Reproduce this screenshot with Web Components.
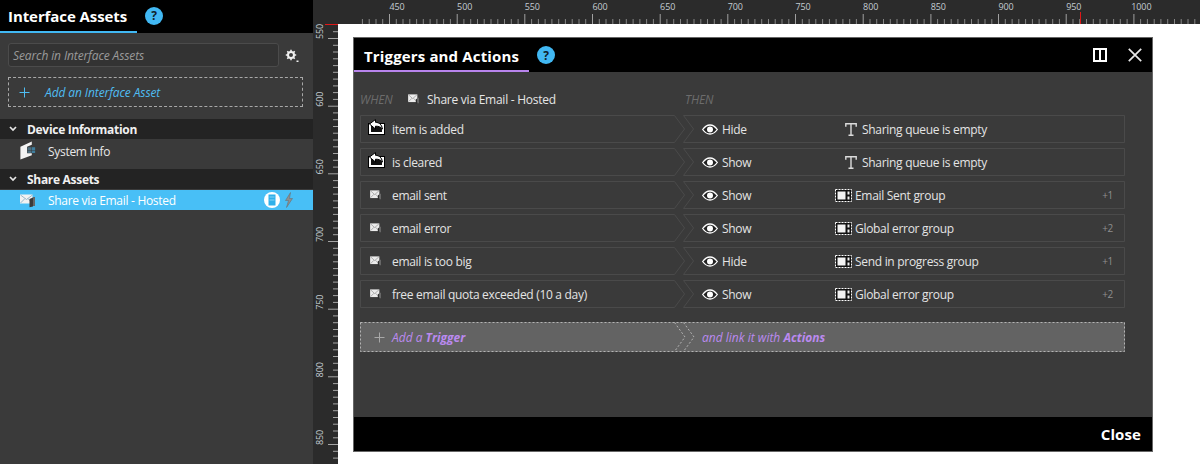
<!DOCTYPE html>
<html>
<head>
<meta charset="utf-8">
<title>Triggers and Actions</title>
<style>
  html, body { margin: 0; height: 464px; overflow: hidden; background: #fff; }
  body { display: flex; font-family: "Open Sans", "Liberation Sans", sans-serif; font-size: 12px; letter-spacing: -.3px; }
</style>
</head>
<body>
<asset-panel></asset-panel>
<work-space>
  <trigger-dialog>
    <trigger-row icon="reply" when="item is added" verb="Hide" kind="text" target="Sharing queue is empty"></trigger-row>
    <trigger-row icon="reply" when="is cleared" verb="Show" kind="text" target="Sharing queue is empty"></trigger-row>
    <trigger-row icon="mail" when="email sent" verb="Show" kind="group" target="Email Sent group" more="+1"></trigger-row>
    <trigger-row icon="mail" when="email error" verb="Show" kind="group" target="Global error group" more="+2"></trigger-row>
    <trigger-row icon="mail" when="email is too big" verb="Hide" kind="group" target="Send in progress group" more="+1"></trigger-row>
    <trigger-row icon="mail" when="free email quota exceeded (10 a day)" verb="Show" kind="group" target="Global error group" more="+2"></trigger-row>
  </trigger-dialog>
</work-space>

<script>
const ICONS = {
  reply: `<svg width="17" height="16" viewBox="0 0 17 16"><path d="M0 4h17v12H0z" fill="#000"/><path d="M2 6h13v8H2z" fill="#111" stroke="#fff" stroke-width="2"/><path d="M1.500 5L7.500 .5v2.800c3.800.2 6.200 2.200 7 6.700-1.600-2-3.700-2.800-7-2.800v2.800z" fill="#fff" stroke="#000" stroke-width="1"/></svg>`,
  mail: `<svg width="11" height="10" viewBox="0 0 14 13"><path d="M0 .5h12v10H0z" fill="#ececec"/><path d="M.5 1l5.500 5 5.500-5M.5 10l4.500-4.500M11.500 10L7 5.500" fill="none" stroke="#9c9c9c" stroke-width="1"/><path d="M10 7l2-1.500v7l-2 .5z" fill="#2f2f2f"/><path d="M12 5h2v7h-2z" fill="#6d6d6d"/></svg>`,
  bigmail: `<svg width="16" height="15" viewBox="0 0 16 15"><path d="M0 1.500h12.500v9H0z" fill="#f2f2f2"/><path d="M.5 2l6 4.500 6-4.500M.5 10l4.500-4.500M12 10L8 5.500" fill="none" stroke="#8eb0c4" stroke-width=".9"/><path d="M9.500 6l3.500-1.500v9l-3.500.8z" fill="#3a3a3a"/><path d="M13 4h2v9h-2z" fill="#666"/></svg>`,
  sys: `<svg width="16" height="19" viewBox="0 0 16 20"><path d="M0 6l12-5.500v3.500L7 6v7h5v2L0 19.500z" fill="#f4f4f4"/><path d="M7.500 6.500h4v3h-4zM7.500 10h4v2.500h-4z" fill="#4f6f80"/><path d="M12 6.500h3.500v3H12zM12 10h3.500v2.500H12z" fill="#3f7d9c"/></svg>`,
  eye: `<svg width="16" height="11" viewBox="0 0 16 11"><path d="M.7 5.500C3 2.200 5.400 1 8 1s5 1.200 7.300 4.500C13 8.800 10.600 10 8 10S3 8.800.7 5.500z" fill="#222" stroke="#fff" stroke-width="1.300"/><circle cx="8" cy="5.500" r="3" fill="#fff"/></svg>`,
  group: `<svg width="17" height="13" viewBox="0 0 17 13"><rect x=".5" y=".5" width="16" height="12" fill="#111" stroke="#fff" stroke-dasharray="2 1"/><path d="M2.500 2.500h8v8h-8z" fill="#f2f2f2"/><path d="M12.500 2.500h2v3h-2zM12.500 7.500h2v3h-2z" fill="#f2f2f2"/></svg>`,
  t: `<svg width="12" height="13" viewBox="0 0 12 13"><path d="M.8 3.800V.8h10.400v3M6 .8v11.400M3.500 12.200h5" fill="none" stroke="#dcdcdc" stroke-width="1.400"/></svg>`,
  gear: `<svg width="14" height="14" viewBox="0 0 14 14"><circle cx="6" cy="6" r="3" fill="none" stroke="#f0f0f0" stroke-width="2"/><path d="M6 .8v2M6 9.200v2M.8 6h2M9.200 6h2M2.300 2.300l1.400 1.400M8.300 8.300l1.400 1.400M2.300 9.700l1.400-1.400M8.300 3.700l1.400-1.400" stroke="#f0f0f0" stroke-width="1.600"/><path d="M11.500 11.500h2v1.500h-2z" fill="#f0f0f0"/></svg>`,
  chevron: `<svg width="8" height="6" viewBox="0 0 8 6"><path d="M1 1l3 3 3-3" fill="none" stroke="#e6e6e6" stroke-width="1.700"/></svg>`,
  split: `<svg width="14" height="14" viewBox="0 0 14 14"><path d="M1 1h12v12H1zM7 1v12" fill="none" stroke="#fff" stroke-width="2"/></svg>`,
  close: `<svg width="14" height="14" viewBox="0 0 14 14"><path d="M.8.800l12.400 12.400M13.200.800L.8 13.200" stroke="#e8e8e8" stroke-width="1.700"/></svg>`,
  plus: `<svg width="11" height="11" viewBox="0 0 11 11"><path d="M5.500.5v10M.5 5.500h10" stroke="currentColor" stroke-width="1"/></svg>`,
  doc: `<svg width="18" height="18" viewBox="0 0 18 18"><circle cx="9" cy="9" r="8" fill="#fff"/><path d="M5.500 3.500h7v11h-7z" fill="#2fb0ea"/><path d="M6.500 6h5M6.500 9h5" stroke="#9bdcf8" stroke-width=".8"/></svg>`,
  bolt: `<svg width="10" height="16" viewBox="0 0 10 16"><path d="M6.500.5L1.500 8.500h3L2.500 15.500l6-9h-3z" fill="#8f8f8f" stroke="#666" stroke-width=".5"/></svg>`
};

class UiIcon extends HTMLElement {
  connectedCallback() {
    const root = this.attachShadow({mode: 'open'});
    root.innerHTML = `<style>:host { display: inline-flex; align-items: center; justify-content: center; flex: none; }
      svg { display: block; }</style>${ICONS[this.getAttribute('name')]}`;
  }
}
customElements.define('ui-icon', UiIcon);

class HelpBadge extends HTMLElement {
  connectedCallback() {
    this.attachShadow({mode: 'open'}).innerHTML = `<style>
      :host { display: inline-flex; width: 18px; height: 18px; border-radius: 50%; background: #41b8f3; color: #10222c;
        align-items: center; justify-content: center; font: 700 12px "Open Sans", sans-serif; }
    </style>?`;
  }
}
customElements.define('help-badge', HelpBadge);

class AssetGroup extends HTMLElement {
  connectedCallback() {
    this.attachShadow({mode: 'open'}).innerHTML = `<style>
      :host { display: flex; align-items: center; height: 20px; background: #232323; color: #f0f0f0;
        font-weight: 700; font-size: 12px; padding-left: 9px; gap: 10px; }
    </style><ui-icon name="chevron"></ui-icon><slot></slot>`;
  }
}
customElements.define('asset-group', AssetGroup);

class AssetItem extends HTMLElement {
  connectedCallback() {
    this.attachShadow({mode: 'open'}).innerHTML = `<style>
      :host { display: flex; align-items: center; height: 20px; color: #e8e8e8; position: relative; }
      :host([tall]) { height: 30px; align-items: flex-start; box-sizing: border-box; padding-top: 2px; }
      :host([tall]) .txt { padding-top: 2px; }
      :host([selected]) { background: #48bff6; color: #fff; margin-top: 1px; }
      .ic { width: 48px; display: flex; justify-content: flex-end; padding-right: 12px; box-sizing: border-box; }
      .tail { margin-left: auto; display: flex; align-items: center; gap: 3px; padding-right: 19px; }
    </style>
    <span class="ic"><ui-icon name="${this.getAttribute('icon')}"></ui-icon></span>
    <span class="txt"><slot></slot></span>
    <span class="tail"><slot name="tail"></slot></span>`;
  }
}
customElements.define('asset-item', AssetItem);

class AssetPanel extends HTMLElement {
  connectedCallback() {
    this.attachShadow({mode: 'open'}).innerHTML = `<style>
      :host { display: block; width: 313px; height: 464px; background: #3a3a3a; flex: none; color: #eee; }
      header { height: 33px; background: #000; display: flex; align-items: center; box-sizing: border-box; }
      .tab { width: 137px; height: 33px; box-sizing: border-box; border-bottom: 2px solid #41b8f3; padding-left: 8px;
        font: 700 15px/33px "Open Sans", sans-serif; letter-spacing: -.08px; color: #fff; }
      help-badge { margin-left: 8px; margin-top: -2px; }
      .tools { padding: 10px 10px 0 8px; }
      .search { display: flex; align-items: center; gap: 6px; }
      .box { width: 271px; height: 24px; box-sizing: border-box; background: #333; border: 1px solid #4b4b4b; border-radius: 3px;
        color: #9a9a9a; font-style: italic; line-height: 23px; padding-left: 4px; letter-spacing: -.12px; }
      .search ui-icon { margin-top: 1px; }
      .add { display: flex; align-items: center; height: 30px; box-sizing: border-box; margin-top: 10px;
        border: 1px dashed #a8a8a8; color: #4fbdf2; font-style: italic; padding-left: 10px; gap: 15px; letter-spacing: -.1px; }
      .list { margin-top: 12px; }
      .add ui-icon { color: #4fbdf2; }
    </style>
    <header><div class="tab">Interface Assets</div><help-badge></help-badge></header>
    <div class="tools">
      <div class="search"><div class="box">Search in Interface Assets</div><ui-icon name="gear"></ui-icon></div>
      <div class="add"><ui-icon name="plus"></ui-icon><span>Add an Interface Asset</span></div>
    </div>
    <div class="list">
      <asset-group>Device Information</asset-group>
      <asset-item icon="sys" tall>System Info</asset-item>
      <asset-group>Share Assets</asset-group>
      <asset-item icon="bigmail" selected>Share via Email - Hosted
        <ui-icon slot="tail" name="doc"></ui-icon><ui-icon slot="tail" name="bolt"></ui-icon>
      </asset-item>
    </div>`;
  }
}
customElements.define('asset-panel', AssetPanel);

// px per design unit on both rulers, from the 50 unit label spacing
const RULER_SCALE = 67.67 / 50;

class UiRuler extends HTMLElement {
  connectedCallback() {
    const vertical = this.hasAttribute('vertical');
    const marks = [];
    if (!vertical) {
      for (let v = 430; v <= 1045; v += 5) {
        const x = 76 + (v - 450) * RULER_SCALE;
        if (x < 25) continue;
        const major = v % 50 === 0;
        marks.push(`<rect x="${x.toFixed(1)}" y="${major ? 14 : 19}" width="1" height="${major ? 10 : 5}" fill="${major ? '#a0a0a0' : '#868686'}"/>`);
        if (major) marks.push(`<text x="${x + 8}" y="10" text-anchor="middle">${v}</text>`);
      }
      marks.push(`<rect x="767" y="12" width="1" height="12" fill="#e01818"/><rect x="0" y="0" width="25" height="24" fill="#2b2b2b"/>`);
    } else {
      for (let v = 545; v <= 875; v += 5) {
        const y = 14 + (v - 550) * RULER_SCALE;
        if (y < 0) continue;
        const major = v % 50 === 0;
        marks.push(`<rect x="${major ? 15 : 20}" y="${y.toFixed(1)}" width="${major ? 10 : 5}" height="1" fill="#a4a4a4"/>`);
        if (major) marks.push(`<text transform="translate(10 ${y - 6.5}) rotate(-90)" text-anchor="middle">${v}</text>`);
      }
      marks.push(`<rect x="12" y="0" width="13" height="1" fill="#e01818"/>`);
    }
    const w = vertical ? 25 : 887, h = vertical ? 440 : 24;
    this.attachShadow({mode: 'open'}).innerHTML = `<style>
      :host { display: block; flex: none; width: ${w}px; height: ${h}px; background: #2b2b2b; }
      svg { display: block; }
      text { font: 9px "Open Sans", sans-serif; fill: #c4ccd2; letter-spacing: -.1px; }
    </style><svg width="${w}" height="${h}">${marks.join('')}</svg>`;
  }
}
customElements.define('ui-ruler', UiRuler);

class WorkSpace extends HTMLElement {
  connectedCallback() {
    this.attachShadow({mode: 'open'}).innerHTML = `<style>
      :host { display: flex; flex-direction: column; flex: 1; height: 464px; min-width: 0; }
      .body { display: flex; flex: 1; }
      .canvas { flex: 1; background: #fff; padding: 13px 0 0 15px; }
    </style>
    <ui-ruler></ui-ruler>
    <div class="body"><ui-ruler vertical></ui-ruler><div class="canvas"><slot></slot></div></div>`;
  }
}
customElements.define('work-space', WorkSpace);

class TriggerDialog extends HTMLElement {
  connectedCallback() {
    this.attachShadow({mode: 'open'}).innerHTML = `<style>
      :host { display: flex; flex-direction: column; width: 800px; height: 415px; box-sizing: border-box;
        border: 1px solid #666; background: #3a3a3a; color: #e6e6e6; }
      header { height: 34px; flex: none; background: #000; display: flex; align-items: center; }
      .tab { width: 175px; height: 34px; box-sizing: border-box; border-bottom: 2px solid #b884ec; padding-left: 10px;
        font: 700 15px/36px "Open Sans", sans-serif; letter-spacing: .15px; color: #fff; }
      help-badge { margin-left: 8px; }
      .acts { margin-left: auto; display: flex; align-items: center; gap: 21px; padding-right: 10px; }
      main { flex: 1; padding: 17px 27px 0 6px; display: flex; flex-direction: column; gap: 5px; }
      .heads { display: flex; align-items: center; height: 21px; margin-bottom: 0; }
      .label { color: #6c6c6c; font-style: italic; letter-spacing: -.1px; }
      .when { width: 48px; }
      .src { width: 19px; }
      .hostname { width: 258px; letter-spacing: -.25px; }
      footer { height: 34px; flex: none; background: #000; display: flex; align-items: center; justify-content: flex-end;
        padding-right: 11px; font: 700 15px "Open Sans", sans-serif; color: #fff; letter-spacing: .1px; }
    </style>
    <header><div class="tab">Triggers and Actions</div><help-badge></help-badge>
      <div class="acts"><ui-icon name="split"></ui-icon><ui-icon name="close"></ui-icon></div></header>
    <main>
      <div class="heads"><span class="label when">WHEN</span><span class="src"><ui-icon name="mail"></ui-icon></span>
        <span class="hostname">Share via Email - Hosted</span><span class="label">THEN</span></div>
      <slot></slot>
      <add-row></add-row>
    </main>
    <footer>Close</footer>`;
  }
}
customElements.define('trigger-dialog', TriggerDialog);

class TriggerRow extends HTMLElement {
  connectedCallback() {
    const a = n => this.getAttribute(n) || '';
    const isText = a('kind') === 'text';
    const isMail = a('icon') === 'mail';
    this.attachShadow({mode: 'open'}).innerHTML = `<style>
      :host { display: flex; position: relative; height: 28px; align-items: center; color: #e4e4e4; }
      svg.outline { position: absolute; left: 0; top: 0; }
      .when { width: 323px; display: flex; align-items: center; padding-left: 8px; box-sizing: border-box; position: relative; }
      .when .ic { width: ${isMail ? 22 : 24}px; padding-left: ${isMail ? 2 : 0}px; }
      .then { flex: 1; display: flex; align-items: center; position: relative; padding-left: 19px; }
      .verb { width: ${isText ? 143 : 133}px; display: flex; align-items: center; gap: 4px; }
      .target { display: flex; align-items: center; gap: ${isText ? 5 : 3}px; }
      .more { position: absolute; right: 12px; color: #8e8e8e; font-size: 10px; }
    </style>
    <svg class="outline" width="765" height="28" fill="none" stroke="#4a4a4a">
      <path d="M.5.500H314.500L324.500 14 314.500 27.500H.5z"/>
      <path d="M323.500.500H764.500V27.500H323.500L333.500 14z"/>
    </svg>
    <div class="when"><span class="ic"><ui-icon name="${a('icon')}"></ui-icon></span>${a('when')}</div>
    <div class="then">
      <span class="verb"><ui-icon name="eye"></ui-icon>${a('verb')}</span>
      <span class="target"><ui-icon name="${isText ? 't' : 'group'}"></ui-icon>${a('target')}</span>
      ${a('more') ? `<span class="more">${a('more')}</span>` : ''}
    </div>`;
  }
}
customElements.define('trigger-row', TriggerRow);

class AddRow extends HTMLElement {
  connectedCallback() {
    this.attachShadow({mode: 'open'}).innerHTML = `<style>
      :host { display: flex; position: relative; height: 30px; margin-top: 9px; align-items: center; color: #bb8af0; font-style: italic; letter-spacing: 0; }
      svg { position: absolute; left: 0; top: 0; }
      .a { width: 342px; display: flex; align-items: center; position: relative; gap: 7px; padding-left: 14px; box-sizing: border-box; }
      .a ui-icon { color: #a8a8a8; }
      span { position: relative; }
    </style>
    <svg width="765" height="30">
      <rect width="765" height="30" fill="#636363"/>
      <rect x=".5" y=".5" width="764" height="29" fill="none" stroke="#b4b4b4" stroke-dasharray="2 2"/>
      <path d="M314.500 .5L325 15 314.500 29.500M323.500 .5L334 15 323.500 29.500" fill="none" stroke="#b4b4b4" stroke-dasharray="2 2"/>
    </svg>
    <div class="a"><ui-icon name="plus"></ui-icon><span>Add a <b>Trigger</b></span></div>
    <span>and link it with <b>Actions</b></span>`;
  }
}
customElements.define('add-row', AddRow);
</script>
</body>
</html>
